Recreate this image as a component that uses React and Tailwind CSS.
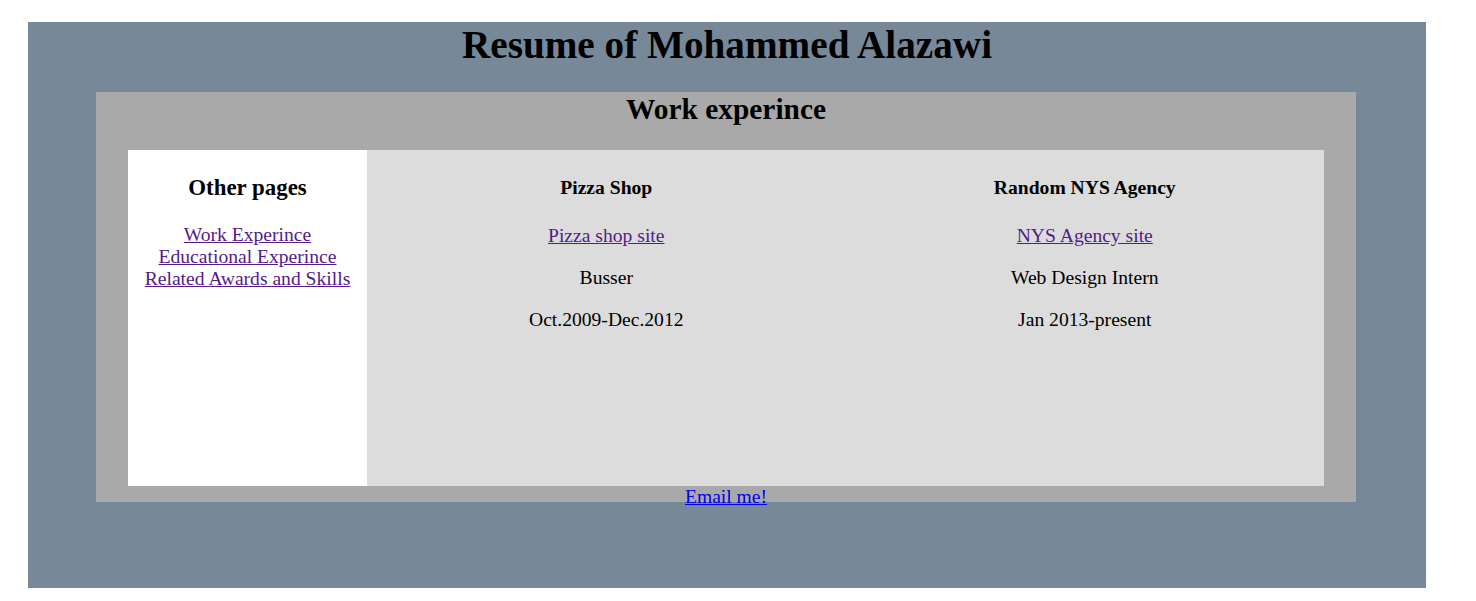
import React from 'react';

// Resume page - work experience
const jobs = [
  { name: 'Pizza Shop', site: 'Pizza shop site', role: 'Busser', dates: 'Oct.2009-Dec.2012' },
  { name: 'Random NYS Agency', site: 'NYS Agency site', role: 'Web Design Intern', dates: 'Jan 2013-present' },
];

const pages = ['Work Experince', 'Educational Experince', 'Related Awards and Skills'];

export default function App() {
  return (
    <div className="min-h-[601px] bg-white pt-[22px] font-['Liberation_Serif',serif] text-black">
      <div className="ml-[28px] w-[1398px] h-[566px] bg-[#778899]">
        <h1 className="pt-[1px] text-center text-[39.2px] leading-[43px] font-bold">Resume of Mohammed Alazawi</h1>

        <div className="ml-[68px] mt-[26px] w-[1260px] h-[410px] bg-[#a9a9a9] px-8">
          <h2 className="pt-[1px] text-center text-[29.4px] leading-[32px] font-bold">Work experince</h2>

          {/* main row */}
          <div className="mt-[25px] flex h-[336px]">
            <div className="w-[239px] bg-white pt-[25px] text-center">
              <h3 className="text-[22.9px] leading-[25px] font-bold">Other pages</h3>
              <div className="mt-[24px] flex flex-col text-[19.6px] leading-[22px]">
                {pages.map((p) => (
                  <a key={p} href="#" className="text-[#551a8b] underline">{p}</a>
                ))}
              </div>
            </div>

            <div className="flex-1 grid grid-cols-2 bg-[#dcdcdc] pt-[27px] text-center text-[19.6px] leading-[22px]">
              {jobs.map((job) => (
                <div key={job.name}>
                  <h4 className="font-bold">{job.name}</h4>
                  <p className="mt-[26px]">
                    <a href="#" className="text-[#551a8b] underline">{job.site}</a>
                  </p>
                  <p className="mt-[19.5px]">{job.role}</p>
                  <p className="mt-[20px]">{job.dates}</p>
                </div>
              ))}
            </div>
          </div>

          <div className="text-center text-[19.6px] leading-[22px]">
            <a href="#" className="text-[#0000ee] underline">Email me!</a>
          </div>
        </div>
      </div>
    </div>
  );
}
